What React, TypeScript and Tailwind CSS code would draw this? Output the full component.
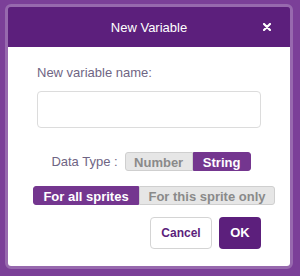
import { useState } from "react";

// Scratch-style "New Variable" dialog
export default function App() {
  const [name, setName] = useState("");
  const [dataType, setDataType] = useState<"number" | "string">("string");
  const [scope, setScope] = useState<"all" | "this">("all");

  return (
    <div
      className="w-[300px] h-[276px] bg-[#7b3f98] pt-[4px] pl-[5px]"
      style={{ fontFamily: '"Liberation Sans", Arial, sans-serif' }}
    >
      <div className="w-[288px] border-[3px] border-[#9769ae] rounded-[6px] overflow-hidden">
        {/* HEADER */}
        <div className="relative h-[40px] bg-[#5c1f7c] flex items-center justify-center">
          <span className="text-[13px] text-white leading-none">New Variable</span>
          <button className="absolute right-[19px] top-[16px] w-[8px] h-[8px] flex items-center justify-center">
            <svg width="8" height="8" viewBox="0 0 8 8">
              <path d="M1 1L7 7M7 1L1 7" stroke="white" strokeWidth="2.2" strokeLinecap="round" />
            </svg>
          </button>
        </div>

        {/* BODY */}
        <div className="bg-white h-[219px] pt-[18px] px-[29px]">
          <p className="text-[13px] leading-[15px] text-[#6f6584]">New variable name:</p>
          <input
            value={name}
            onChange={(e) => setName(e.target.value)}
            className="mt-[11px] w-[224px] h-[37px] border border-[#dcdcdc] rounded-[4px] outline-none px-2 text-[13px]"
          />

          {/* DATA TYPE */}
          <div className="mt-[24px] -mx-[29px] pl-[4px] flex justify-center items-center">
            <span className="text-[13px] text-[#6f6584] mr-[7px]">Data Type :</span>
            <div className="flex h-[19px] text-[13px] font-bold">
              <button
                onClick={() => setDataType("number")}
                className={`w-[68px] rounded-l-[3px] border ${
                  dataType === "number"
                    ? "bg-[#74368f] border-[#74368f] text-white"
                    : "bg-[#e6e6e6] border-[#cfcfcf] text-[#8a8a8a]"
                }`}
              >
                Number
              </button>
              <button
                onClick={() => setDataType("string")}
                className={`w-[58px] rounded-r-[3px] border ${
                  dataType === "string"
                    ? "bg-[#74368f] border-[#74368f] text-white"
                    : "bg-[#e6e6e6] border-[#cfcfcf] text-[#8a8a8a]"
                }`}
              >
                String
              </button>
            </div>
          </div>

          {/* SCOPE */}
          <div className="mt-[14px] -mx-[29px] pl-[10px] flex justify-center">
            <div className="flex h-[19px] text-[13px] font-bold">
              <button
                onClick={() => setScope("all")}
                className={`w-[106px] rounded-l-[3px] border ${
                  scope === "all"
                    ? "bg-[#74368f] border-[#74368f] text-white"
                    : "bg-[#e6e6e6] border-[#cfcfcf] text-[#8a8a8a]"
                }`}
              >
                For all sprites
              </button>
              <button
                onClick={() => setScope("this")}
                className={`w-[136px] rounded-r-[3px] border ${
                  scope === "this"
                    ? "bg-[#74368f] border-[#74368f] text-white"
                    : "bg-[#e6e6e6] border-[#cfcfcf] text-[#8a8a8a]"
                }`}
              >
                For this sprite only
              </button>
            </div>
          </div>

          {/* BUTTONS */}
          <div className="mt-[12px] w-[224px] flex justify-end gap-[7px]">
            <button className="w-[62px] h-[32px] border border-[#d4d4d4] rounded-[4px] bg-white text-[12px] font-bold text-[#5c1f7c]">
              Cancel
            </button>
            <button className="w-[42px] h-[32px] rounded-[4px] bg-[#5c1f7c] text-[13px] font-bold text-white">
              OK
            </button>
          </div>
        </div>
      </div>
    </div>
  );
}
